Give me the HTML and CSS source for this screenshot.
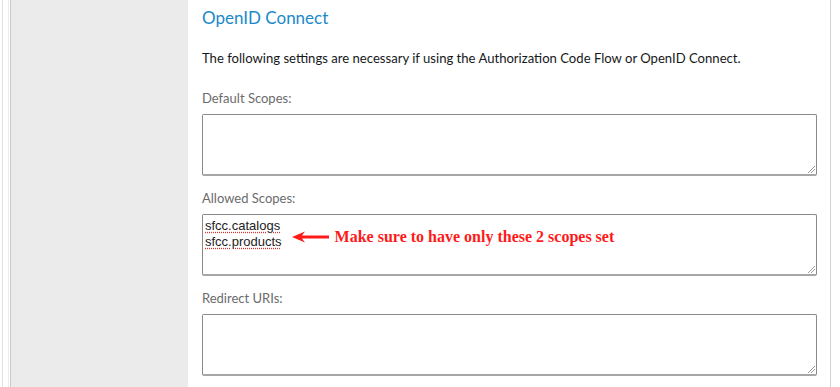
FILE: index.html
```html
<!DOCTYPE html>
<html>
<head lang="en">
    <meta charset="UTF-8">
    <title>OpenID Connect</title>
    <link rel="stylesheet" href="styles.css">
</head>
<body>
<div class="page">
    <div class="rail"></div>
    <div class="sidebar"></div>
    <div class="content">
        <h2 class="title">OpenID Connect</h2>
        <p class="intro">The following settings are necessary if using the Authorization Code Flow or OpenID Connect.</p>

        <div class="field">
            <div class="label">Default Scopes:</div>
            <div class="box">
                <svg class="grip" width="8" height="8" viewBox="0 0 8 8"><path d="M1 8 L8 1 M4 8 L8 4" stroke="#999" stroke-width="1"/></svg>
            </div>
        </div>

        <div class="field">
            <div class="label">Allowed Scopes:</div>
            <div class="box">
                <div class="scopes">
                    <span>sfcc.catalogs</span>
                    <span>sfcc.products</span>
                </div>
                <div class="note">
                    <svg width="37" height="12" viewBox="0 0 37 12"><path d="M0 6 L13 0.5 L10 4.6 L37 4.6 L37 7.4 L10 7.4 L13 11.5 Z" fill="#ff1a1a"/></svg>
                    <span>Make sure to have only these 2 scopes set</span>
                </div>
                <svg class="grip" width="8" height="8" viewBox="0 0 8 8"><path d="M1 8 L8 1 M4 8 L8 4" stroke="#999" stroke-width="1"/></svg>
            </div>
        </div>

        <div class="field">
            <div class="label">Redirect URIs:</div>
            <div class="box">
                <svg class="grip" width="8" height="8" viewBox="0 0 8 8"><path d="M1 8 L8 1 M4 8 L8 4" stroke="#999" stroke-width="1"/></svg>
            </div>
        </div>
    </div>
    <div class="edge"></div>
</div>
</body>
</html>
```

FILE: styles.css
```css
* {
    margin: 0;
    padding: 0;
    box-sizing: border-box;
}

body {
    background-color: #fff;
    font-family: Lato, "Noto Sans", sans-serif;
    color: #16181a;
}

.page {
    display: flex;
    height: 387px;
    overflow: hidden;
}

.rail {
    width: 11px;
    border-left: 2px solid #fff;
    border-right: 1px solid #c9c9c9;
    background: linear-gradient(to right, #e2e2e2 0, #e2e2e2 1px, #fff 1px, #fff 6px, #ececec 6px, #ececec 7px, #fff 7px);
}

.sidebar {
    width: 177px;
    background-color: #ebebeb;
}

.content {
    width: 642px;
    padding: 8px 14px 0 14px;
    background-color: #fff;
}

.edge {
    flex: 1;
    border-left: 1px solid #d2d2d2;
}

.title {
    font-size: 17px;
    font-weight: normal;
    color: #1a89c9;
    line-height: 20px;
}

.intro {
    margin-top: 22px;
    font-size: 13.1px;
    line-height: 16px;
}

.field {
    margin-top: 24px;
}

.field + .field {
    margin-top: 14px;
}

.label {
    font-size: 13px;
    line-height: 16px;
    color: #6b6b6b;
    margin-bottom: 8px;
}

.box {
    position: relative;
    display: flex;
    align-items: flex-start;
    width: 615px;
    height: 62px;
    border: 1px solid #8a8a8a;
    border-bottom: 2px solid #a6a6a6;
    border-radius: 2px;
    padding: 3px 2px;
    background-color: #fff;
}

.scopes {
    display: flex;
    flex-direction: column;
    font-family: "Liberation Sans", Arial, sans-serif;
    font-size: 13px;
    line-height: 16px;
    color: #222;
}

.scopes span {
    text-decoration: underline dotted #e0332f;
    text-underline-offset: 2px;
}

.note {
    display: flex;
    align-items: center;
    gap: 6px;
    margin-left: 10px;
    margin-top: 10px;
    font-family: "Liberation Serif", "Times New Roman", serif;
    font-weight: bold;
    font-size: 16px;
    color: #ff1a1a;
}

.grip {
    position: absolute;
    right: 1px;
    bottom: 1px;
}
```
